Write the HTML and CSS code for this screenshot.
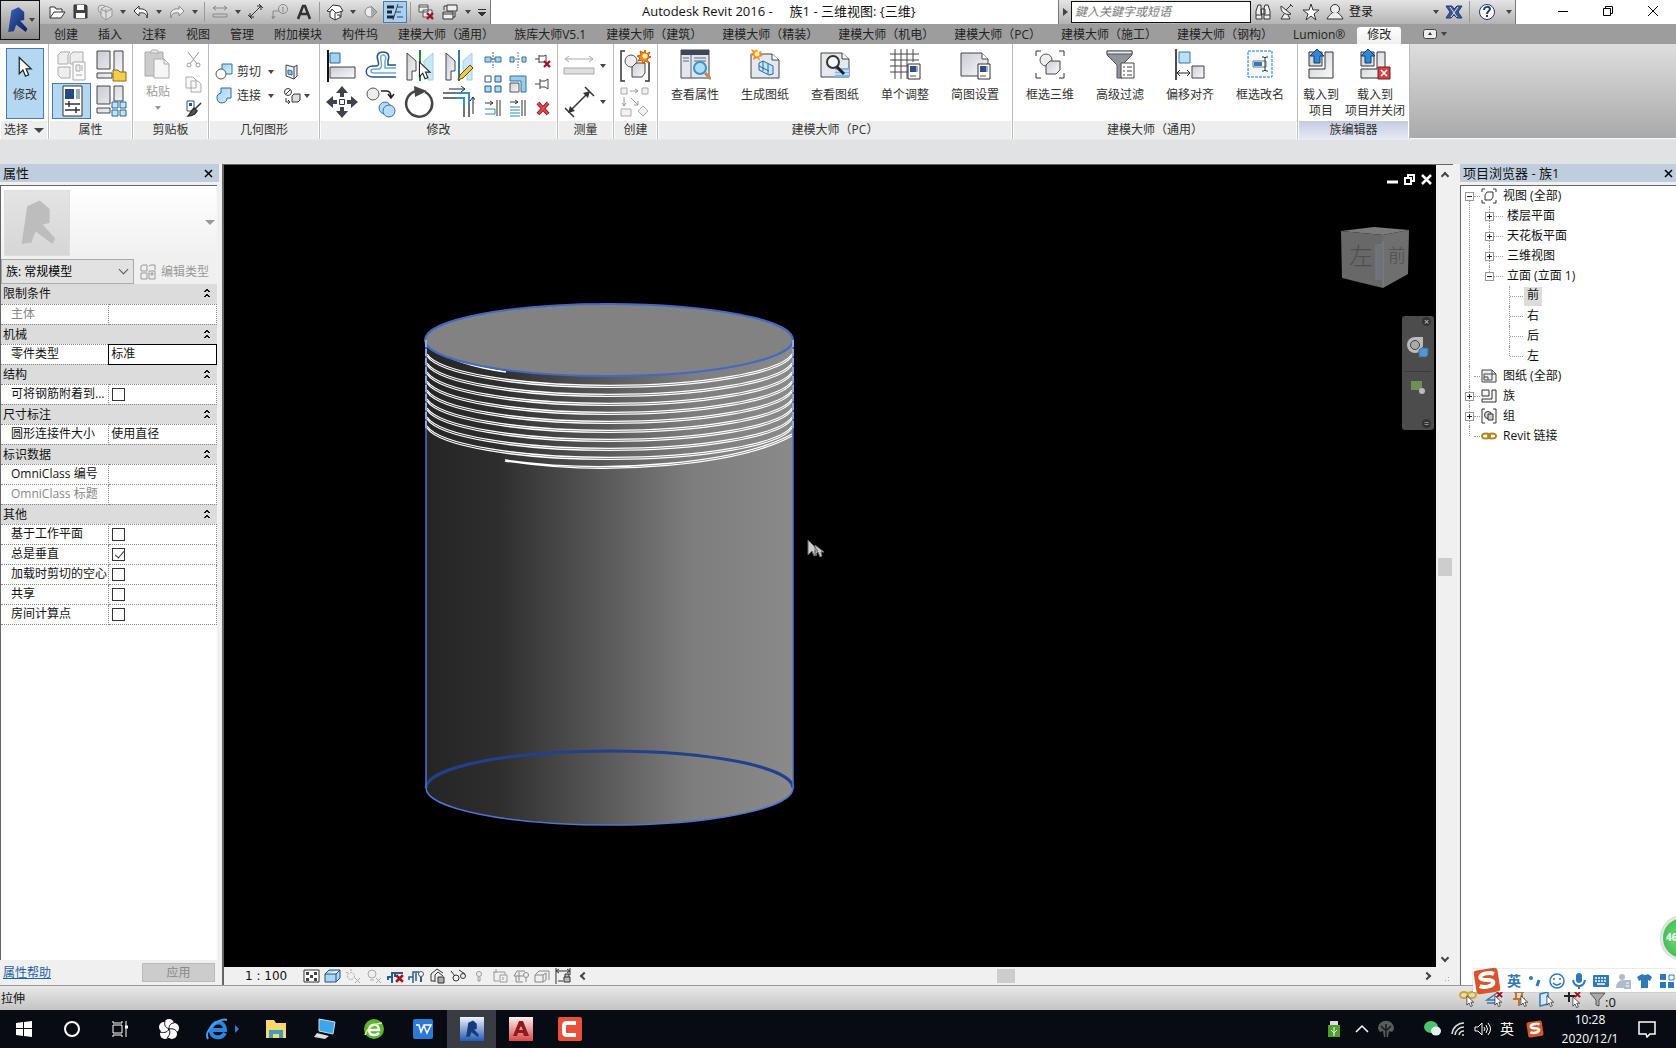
FILE: index.html
```html
<!DOCTYPE html>
<html lang="zh-CN">
<head>
    <meta charset="UTF-8">
    <meta name="viewport" content="width=device-width, initial-scale=1.0">
    <title>Autodesk Revit 2016</title>
    <link rel="stylesheet" href="styles.css">
</head>
<body>
    <svg class="defs" width="0" height="0">
        <defs>
            <linearGradient id="steel" x1="0" y1="0" x2="1" y2="1"><stop offset="0" stop-color="#c9ccd4"/><stop offset="1" stop-color="#fafafc"/></linearGradient>
            <linearGradient id="sky" x1="0" y1="0" x2="1" y2="1"><stop offset="0" stop-color="#9fd0ee"/><stop offset="1" stop-color="#d8effb"/></linearGradient>
            <linearGradient id="navy" x1="0" y1="0" x2="1" y2="1"><stop offset="0" stop-color="#3c66b8"/><stop offset="1" stop-color="#0a1e5c"/></linearGradient>
            <linearGradient id="revit" x1="0" y1="0" x2="0" y2="1"><stop offset="0" stop-color="#f0f4fb"/><stop offset="1" stop-color="#2459b4"/></linearGradient>
            <linearGradient id="acad" x1="0" y1="0" x2="0" y2="1"><stop offset="0" stop-color="#fff0ef"/><stop offset="1" stop-color="#d8474a"/></linearGradient>
            <linearGradient id="side" x1="0" y1="0" x2="1" y2="0"><stop offset="0" stop-color="#252525"/><stop offset="0.2" stop-color="#2e2e2e"/><stop offset="0.5" stop-color="#5b5b5b"/><stop offset="0.72" stop-color="#7d7d7d"/><stop offset="1" stop-color="#8a8a8a"/></linearGradient>
            <symbol id="cursor" viewBox="0 0 12 18"><path d="M1 1v13l3-3 2 5 2.500-1-2-5h4z" fill="#fff" stroke="#222"/></symbol>
            <symbol id="redx" viewBox="0 0 8 8"><path d="M1 1l6 6M7 1l-6 6" stroke="#a3101c" stroke-width="2.400"/></symbol>
            <symbol id="logo-r" viewBox="0 0 30 34"><path d="M8 5l9-4 7 6v10l-5 1 9 10-2 4-12-9-3 8-7 1z"/></symbol>
            <symbol id="sogou" viewBox="0 0 28 28"><g transform="rotate(-9 14 14)"><rect x="2" y="2" width="24" height="24" rx="3" fill="#d9532c"/><path d="M22 8c-5-3-15-2-14 2s12 2 12 6-9 5-14 2" fill="none" stroke="#fff" stroke-width="4"/></g></symbol>
        </defs>
    </svg>

    <header class="app-header">
        <button class="app-button" aria-label="应用程序菜单">
            <svg width="24" height="30"><use href="#logo-r" fill="url(#navy)"/></svg>
            <i class="caret"></i>
        </button>
        <div class="title-bar">
            <div class="quick-access">
                <button><svg width="18" height="18"><path d="M2 15V4h5l1 2h6v3M2 15l4-6h11l-4 6z" fill="#fff" stroke="#333"/></svg></button>
                <button><svg width="18" height="18"><path d="M2 2h12l1 1v12H2z" fill="#444" stroke="#333"/><path d="M5 2h7v5H5zM4 10h9v5H4z" fill="#fff"/></svg></button>
                <button><svg width="18" height="18" fill="#ddd" stroke="#999"><circle cx="6" cy="6" r="4"/><path d="M5 6l5-3 6 3v7l-6 4-5-4zM5 6l5 3 6-3M10 9v8"/></svg></button>
                <button class="drop"><i class="caret"></i></button>
                <button><svg width="18" height="18"><path d="M7 3L2 8l5 5v-3c5-1 8 1 8 5 2-6-2-10-8-9z" fill="#fff" stroke="#333"/></svg></button>
                <button class="drop"><i class="caret"></i></button>
                <button><svg width="18" height="18"><path d="M11 3l5 5-5 5v-3c-5-1-8 1-8 5-2-6 2-10 8-9z" fill="#eee" stroke="#888"/></svg></button>
                <button class="drop"><i class="caret"></i></button>
                <span class="sep"></span>
                <button><svg width="18" height="18" stroke="#888" fill="none"><path d="M2 5h14M5 3L2 5l3 2M13 3l3 2-3 2M2 11h14v3H2z"/></svg></button>
                <button class="drop"><i class="caret"></i></button>
                <button><svg width="18" height="18" stroke="#333" fill="none"><path d="M3 14L14 3M10 3h4v4M3 10v4h4M1 12l4 4M12 1l4 4"/></svg></button>
                <button><svg width="18" height="18" stroke="#888" fill="none"><path d="M2 15V8h6M1 13l1 3 2-3"/><circle cx="12" cy="6" r="4.500"/><path d="M11 5l1-1v5"/></svg></button>
                <button><svg width="18" height="18"><path d="M3 16L8 3h2l5 13M5 11h8" fill="none" stroke="#333" stroke-width="2.600"/></svg></button>
                <span class="sep"></span>
                <button><svg width="18" height="18" fill="#fff" stroke="#333"><path d="M4 8v6l5 3 6-3V8"/><path d="M1 8l6-6 7 1 3 5-7 2-4-4-2 3zM9 10v7M11 12h3v3"/></svg></button>
                <button class="drop"><i class="caret"></i></button>
                <button><svg width="18" height="18"><circle cx="8" cy="9" r="5" fill="#eee" stroke="#888"/><path d="M9 3l6 6-6 6" fill="#aaa" stroke="#888"/></svg></button>
                <button class="pressed"><svg width="18" height="18"><path d="M1 4h7M1 9h5M1 14h7" stroke="#223" stroke-width="3"/><path d="M11 4h6M9 9h6M11 14h6M12 1L7 17" stroke="#345"/></svg></button>
                <span class="sep"></span>
                <button><svg width="18" height="18"><path d="M2 2h9v7H2zM2 4h9M6 7h9v7H6z" fill="#eee" stroke="#555"/><use href="#redx" x="9" y="9" width="8" height="8"/></svg></button>
                <button><svg width="18" height="18"><path d="M6 2h10v6H6zM2 9h10v7H2zM2 11h10M3 7V3h3M14 9v5h-2" fill="#eee" stroke="#333"/></svg></button>
                <button class="drop"><i class="caret"></i></button>
                <button class="drop last"><i class="caret overline"></i></button>
            </div>
            <h1 class="window-title">Autodesk Revit 2016 -     族1 - 三维视图: {三维}</h1>
            <div class="info-center">
                <button class="drop"><i class="caret right"></i></button>
                <input type="text" class="search" placeholder="鍵入关鍵字或短语" aria-label="搜索">
                <button><svg width="18" height="18" fill="#eee" stroke="#333"><path d="M4 2h3v3l1 11H2V8zM11 2h3l2 6v8h-6V5zM7 6h4v5H7zM2 12h6M10 12h6"/></svg></button>
                <button><svg width="18" height="18" fill="#eee" stroke="#333"><path d="M3 3c-1 5 4 10 10 8zM8 7l5-5M12 1l3 3M6 11l-3 5h9l-2-4"/></svg></button>
                <button><svg width="18" height="18"><path d="M9 1l2 6h6l-5 4 2 6-5-4-5 4 2-6-5-4h6z" fill="#fff" stroke="#333"/></svg></button>
                <button><svg width="18" height="18" fill="#eee" stroke="#333"><circle cx="9" cy="6" r="4.500"/><path d="M6 10c-2 2-4 3-5 6h16c-1-3-3-4-5-6"/></svg></button>
                <button class="login">登录</button>
                <button class="drop"><i class="caret"></i></button>
                <button class="exchange"><svg width="18" height="18"><path d="M1 3h6l2 3 3-3h5l-4 6 4 6h-5l-3-3-3 3H1l4-6z" fill="#3d5591" stroke="#26396c"/><path d="M5 4l7 10M13 4l-7 10" stroke="#dde5f5"/></svg></button>
                <button class="help"><svg width="18" height="18"><circle cx="9" cy="9" r="7.500" fill="#fff" stroke="#26396c"/><path d="M6 7c0-4 6-4 6-1 0 2-3 2-3 5M9 12v2" fill="none" stroke="#26396c" stroke-width="2"/></svg></button>
                <button class="drop"><i class="caret"></i></button>
            </div>
            <div class="window-buttons">
                <button aria-label="最小化"><svg width="12" height="12"><path d="M1 6.500h10" stroke="#000"/></svg></button>
                <button aria-label="还原"><svg width="12" height="12" fill="none" stroke="#000"><path d="M1.500 3.500h7v7h-7zM3.500 3V1.500h7v7H9"/></svg></button>
                <button aria-label="关闭"><svg width="12" height="12"><path d="M1 1l10 10M11 1L1 11" stroke="#000"/></svg></button>
            </div>
        </div>
        <nav class="tabs">
            <a href="#">创建</a><a href="#">插入</a><a href="#">注释</a><a href="#">视图</a><a href="#">管理</a><a href="#">附加模块</a><a href="#">构件坞</a><a href="#">建模大师（通用）</a><a href="#">族库大师V5.1</a><a href="#">建模大师（建筑）</a><a href="#">建模大师（精装）</a><a href="#">建模大师（机电）</a><a href="#">建模大师（PC）</a><a href="#">建模大师（施工）</a><a href="#">建模大师（钢构）</a><a href="#">Lumion®</a><a href="#" class="active">修改</a>
            <button class="ribbon-toggle"><svg width="14" height="10"><rect x="0.500" y="0.500" width="13" height="9" rx="2" fill="#eee" stroke="#444"/><path d="M5 6l2-3 2 3z" fill="#333"/></svg><i class="caret"></i></button>
        </nav>
    </header>

    <div class="ribbon">
        <section class="panel p-select">
            <div class="panel-body">
                <button class="tool tall pressed"><svg width="20" height="24"><use href="#cursor" x="3" width="15" height="23"/></svg>修改</button>
            </div>
            <h2>选择 <i class="caret big"></i></h2>
        </section>
        <section class="panel p-props">
            <div class="panel-body grid-2">
                <button><svg width="32" height="32" fill="#eee" stroke="#aaa"><path d="M2 5l3-3h9l-2 3v9H2zM14 5l3-3h10v9l-2 3H14zM2 17h12v11H5l-3-3z"/><path d="M17 12h12v18H17z" fill="#fafafa"/><path d="M20 15h4v6h-4zM26 15v6M20 25h6"/></svg></button>
                <button><svg width="32" height="32"><path d="M2 1h13v18H2zM19 1h9v22h-9zM2 23h15v5H2z" fill="url(#steel)" stroke="#444"/><path d="M18 20h5l2 2h6v9H18z" fill="#f4cf4e" stroke="#8a6a18"/></svg></button>
                <button class="pressed"><svg width="32" height="32"><path d="M7 1h19v30H7z" fill="#fff" stroke="#333"/><path d="M9 4h9v10H9z" fill="#234a86"/><path d="M20 4h4v10h-4z" fill="#9ab"/><path d="M9 19h15M9 25h15M13 16v6M20 22v6" stroke="#333" stroke-width="1.500"/></svg></button>
                <button><svg width="32" height="32"><path d="M2 1h13v18H2zM19 1h9v15h-9zM2 23h13v5H2z" fill="url(#steel)" stroke="#444"/><path d="M17 17h6v6h-6zM25 17h6v6h-6zM17 25h6v6h-6zM25 25h6v6h-6z" fill="#bfe3f7" stroke="#2a6591"/></svg></button>
            </div>
            <h2>属性</h2>
        </section>
        <section class="panel p-clip">
            <div class="panel-body">
                <button class="tool tall disabled"><svg width="32" height="32" stroke="#aaa"><path d="M3 4h18v24H3z" fill="#ccc"/><path d="M8 5l2-3h5l2 3z" fill="#eee"/><path d="M12 11h10l5 5v14H12z" fill="#f6f6f6"/><path d="M22 11v5h5" fill="none"/></svg>粘贴<i class="caret"></i></button>
                <div class="stack">
                    <button><svg width="18" height="18" fill="none" stroke="#999"><path d="M3 1l9 12M14 1L5 13"/><circle cx="4" cy="14" r="2"/><circle cx="13" cy="14" r="2"/></svg></button>
                    <button><svg width="18" height="18" fill="#fafafa" stroke="#aaa"><path d="M1 2h7l3 3v8H1zM6 6h7l3 3v8H6z"/></svg></button>
                    <button><svg width="18" height="18"><path d="M2 2h7v10H2z" fill="#fff" stroke="#334a77"/><path d="M4 4h3v3H4z" fill="#334a77"/><path d="M16 4l-6 6M9 9l3 3c-2 4-5 5-9 5 2-2 3-5 6-8z" fill="#555" stroke="#333" stroke-width="1.500"/></svg></button>
                </div>
            </div>
            <h2>剪贴板</h2>
        </section>
        <section class="panel p-geom">
            <div class="panel-body rows">
                <div class="row">
                    <button><svg width="18" height="18"><path d="M7 1h10v10H7z" fill="url(#sky)" stroke="#3273a3"/><circle cx="6" cy="11" r="5" fill="#fff" stroke="#555"/></svg>剪切</button>
                    <button class="drop"><i class="caret"></i></button>
                    <button class="lone"><svg width="18" height="18"><path d="M3 2l8 2 3-2v11l-3 3-8-3zM11 4v12" fill="#eee" stroke="#444"/><path d="M5 7l4 1v4l-4-1z" fill="#8ccbf0" stroke="#286a9a"/></svg></button>
                </div>
                <div class="row">
                    <button><svg width="18" height="18"><path d="M6 6V1h10v10h-4a5 5 0 1 1-6-5z" fill="url(#sky)" stroke="#286a9a"/></svg>连接</button>
                    <button class="drop"><i class="caret"></i></button>
                    <button class="lone"><svg width="18" height="18"><circle cx="5" cy="5" r="3.500" fill="#fff" stroke="#333"/><path d="M3 7l4-4M3 11v4h3M5 13l2 2-2 2" fill="none" stroke="#333"/><path d="M9 9l2-2h6v6l-2 2H9z" fill="#ddd" stroke="#333"/></svg></button>
                    <button class="drop"><i class="caret"></i></button>
                </div>
            </div>
            <h2>几何图形</h2>
        </section>
        <section class="panel p-modify">
            <div class="panel-body">
                <div class="grid-4">
                    <button><svg width="32" height="32"><path d="M2 0v32" stroke="#111" stroke-width="2"/><path d="M4 3h10v10H4z" fill="#9fd3f2" stroke="#2a6591"/><path d="M4 17h25v11H4z" fill="url(#steel)" stroke="#444"/></svg></button>
                    <button><svg width="32" height="32" fill="none" stroke-width="1.500"><path d="M31 27H8c-9 0-9-11 0-11h3c3 0 3-2 2-5-2-6 0-9 5-9s7 3 5 9v4h8" stroke="#285680"/><path d="M31 23H9c-4 0-4-4 0-4h4c4 0 4-4 3-8-1-4 0-6 2-6s4 2 2 6v7h11" stroke="#71a8d0"/></svg></button>
                    <button><svg width="32" height="32"><path d="M3 3l9 8v10H8v9H3z" fill="url(#steel)" stroke="#444"/><path d="M29 3l-9 8v10h4v9h5z" fill="#c8e7f8" stroke="#a8cde2"/><path d="M16 0v31" stroke="#218a35" stroke-width="2"/><use href="#cursor" x="14" y="11" width="14" height="20"/></svg></button>
                    <button><svg width="32" height="32"><path d="M3 3l9 8v10H8v9H3z" fill="url(#steel)" stroke="#444"/><path d="M29 3l-9 8v10h4v9h5z" fill="#c8e7f8" stroke="#a8cde2"/><path d="M16 0v31" stroke="#3476ac" stroke-width="2"/><path d="M15 30l2-5 10-10 3 3-10 10z" fill="#f2c84b" stroke="#5f4718"/></svg></button>
                    <button><svg width="32" height="32" fill="#3d424c"><path d="M16 0l6 7h-4v4h-4V7h-4zM16 32l6-7h-4v-4h-4v4h-4zM0 16l7-6v4h4v4H7v4zM32 16l-7-6v4h-4v4h4v4z"/><path d="M13.500 13.500h5v5h-5z" fill="#fff" stroke="#333"/></svg></button>
                    <button><svg width="32" height="32"><circle cx="8" cy="8" r="6" fill="#eee" stroke="#555"/><path d="M16 5h6q4 0 4 7M23 8l3 4 3-4" fill="none" stroke="#222" stroke-width="1.500"/><circle cx="20" cy="22" r="6" fill="#b5dcf4" stroke="#3273a3"/><circle cx="24" cy="25" r="6" fill="#b5dcf4" stroke="#3273a3"/></svg></button>
                    <button><svg width="32" height="32"><path d="M12 5a13 13 0 1 0 9 1" fill="none" stroke="#444" stroke-width="2.500"/><path d="M10 0l13 5-12 6z" fill="#444"/></svg></button>
                    <button><svg width="32" height="32" fill="none"><path d="M0 7h14M0 12h14M21 16v15M26 16v15" stroke="#444" stroke-width="1.500"/><path d="M12 7h14v12M12 12h9v7" stroke="#3b8ec5" stroke-width="2"/><path d="M6 3h15M18 0l4 3-4 3M30 28V12M27 15l3-4 3 4" stroke="#222"/></svg></button>
                </div>
                <div class="grid-3">
                    <button><svg width="18" height="18"><path d="M1 6h6v5H1zM11 6h6v5h-6z" fill="#9fd3f2" stroke="#3273a3"/><path d="M9 1v16M7 8h4" stroke="#555" stroke-dasharray="2 1"/></svg></button>
                    <button><svg width="18" height="18"><path d="M1 6h4v5H1zM13 6h4v5h-4z" fill="#9fd3f2" stroke="#3273a3"/><path d="M6 8h6M9 1v16" stroke="#777" stroke-dasharray="2 1"/></svg></button>
                    <button><svg width="18" height="18"><path d="M1 8h4M5 4v8M5 5h5l2-1v8l-2-1H5" fill="none" stroke="#444"/><use href="#redx" x="9" y="9" width="8" height="8"/></svg></button>
                    <button><svg width="18" height="18" stroke="#235887"><path d="M1 1h6v6H1z" fill="#fff"/><path d="M11 1h6v6h-6zM1 11h6v6H1zM11 11h6v6h-6z" fill="#aed9f3"/></svg></button>
                    <button><svg width="18" height="18"><path d="M1 1h16v16h-5V6H1z" fill="#99cdea" stroke="#3273a3"/><path d="M1 8h9v9H1z" fill="url(#steel)" stroke="#555"/></svg></button>
                    <button><svg width="18" height="18"><path d="M1 9h5M6 4v10M6 6h5l3-2v10l-3-2H6" fill="#fff" stroke="#444"/></svg></button>
                    <button><svg width="18" height="18" fill="none"><path d="M1 4h8M6 2l3 2-3 2M13 1v16M16 1v16" stroke="#333"/><path d="M1 10h10v5H1" stroke="#2f86bd"/></svg></button>
                    <button><svg width="18" height="18" fill="none"><path d="M1 3h8M6 1l3 2-3 2M13 1v16M16 1v16" stroke="#333"/><path d="M1 8h10M1 11h10M1 14h10M1 17h10" stroke="#2f86bd"/></svg></button>
                    <button><svg width="18" height="18"><path d="M4 4l10 11M14 4L4 15" stroke="#8b1a20" stroke-width="4"/><path d="M4 4l10 11M14 4L4 15" stroke="#e04a4f" stroke-width="2"/></svg></button>
                </div>
            </div>
            <h2>修改</h2>
        </section>
        <section class="panel p-measure">
            <div class="panel-body rows">
                <div class="row"><button><svg width="32" height="32" stroke="#aaa"><path d="M2 9h28M6 6L2 9l4 3M26 6l4 3-4 3" fill="none"/><path d="M1 18h30v6H1z" fill="#ddd"/></svg></button><button class="drop"><i class="caret"></i></button></div>
                <div class="row"><button><svg width="32" height="32"><path d="M6 26L26 6M2 22l9 9M22 1l9 9" stroke="#333" stroke-width="1.500"/><path d="M5 27l2-7 5 5zM27 5l-2 7-5-5z" fill="#333"/></svg></button><button class="drop"><i class="caret"></i></button></div>
            </div>
            <h2>测量</h2>
        </section>
        <section class="panel p-create">
            <div class="panel-body rows">
                <div class="row"><button><svg width="32" height="32"><path d="M6 1H2v30h4M26 31h4V12" fill="none" stroke="#333" stroke-width="1.500"/><circle cx="12" cy="11" r="6" fill="#eee" stroke="#555"/><path d="M13 17l4-4h9v10l-3 4H13z" fill="url(#steel)" stroke="#444"/><path d="M26 0l1 4 4-2-2 4 3 1-4 2 2 4-4-2-2 3-1-4-4 1 2-3-3-2 4-1-1-4 4 2z" fill="#f58a23" stroke="#c05a0c"/><circle cx="26" cy="6" r="2.500" fill="#fff4a0"/></svg></button></div>
                <div class="row"><button><svg width="32" height="32" fill="#f2f2f2" stroke="#aaa"><path d="M2 2h6v6H2zM23 2h6v6h-6zM2 23h10v7H2zM24 20l5 5-5 5-5-5z"/><path d="M11 5h8M16 3l3 2-3 2M5 11v9M3 17l2 3 2-3M12 12l7 7M19 15v4h-4" fill="none" stroke="#999"/></svg></button></div>
            </div>
            <h2>创建</h2>
        </section>
        <section class="panel p-pc">
            <div class="panel-body">
                <button class="tool"><svg width="32" height="32"><path d="M2 2h28v28H2z" fill="#e3e6ee" stroke="#444"/><path d="M2 2h28v5H2z" fill="#3d4658"/><path d="M12 7v23M4 10h6M4 13h6M15 10h12M15 13h12" stroke="#667"/><circle cx="21" cy="20" r="6" fill="#a9dff7" stroke="#3c93c8" stroke-width="2"/><path d="M26 25l6 6" stroke="#c08a50" stroke-width="3"/></svg>查看属性</button>
                <button class="tool"><svg width="32" height="32"><path d="M2 6h21l7 6v18H2z" fill="#e6e8f0" stroke="#444"/><path d="M23 6v6h7" fill="#fff" stroke="#444"/><path d="M10 15l4-2 10 5v8l-4 1-10-5zM10 18l10 5M14 13v10M19 16v10" fill="#c7e6fa" stroke="#2869a8"/><path d="M8 1l1 3 4-1-2 3 3 2-4 1 1 4-3-3-4 2 1-4-4-1 3-2-2-4 4 2z" fill="#f58a23"/><circle cx="8" cy="6" r="2.500" fill="#fff4a0"/></svg>生成图纸</button>
                <button class="tool"><svg width="32" height="32"><path d="M2 5h21l7 6v18H2z" fill="#e6e8f0" stroke="#444"/><path d="M16 20h14v9H16z" fill="#7db9e8"/><path d="M16 23h14M16 26h14" stroke="#fff"/><path d="M23 5v6h7" fill="#fff" stroke="#444"/><circle cx="14" cy="14" r="6" fill="#f4f6fa" stroke="#333" stroke-width="2"/><path d="M18 19l7 7" stroke="#222" stroke-width="3"/></svg>查看图纸</button>
                <button class="tool"><svg width="32" height="32"><path d="M6 1v30M12 1v30M18 1v30M24 1v13M1 6h29M1 12h29M1 18h18M1 24h18" stroke="#444"/><path d="M19 16h12v15H19z" fill="#fff" stroke="#333"/><path d="M21 18h6v6h-6z" fill="#284f8f"/><path d="M21 28h6M28 18v6" stroke="#555"/></svg>单个调整</button>
                <button class="tool"><svg width="32" height="32"><path d="M2 5h21l6 6v17H2z" fill="url(#steel)" stroke="#444"/><path d="M23 5v6h6" fill="#fff" stroke="#444"/><path d="M19 16h12v15H19z" fill="#fff" stroke="#333"/><path d="M21 18h6v6h-6z" fill="#284f8f"/><path d="M21 28h6M28 18v6" stroke="#555"/></svg>简图设置</button>
            </div>
            <h2>建模大师（PC）</h2>
        </section>
        <section class="panel p-general">
            <div class="panel-body">
                <button class="tool"><svg width="32" height="32"><path d="M2 8V3h5M25 3h5v5M2 25v5h5M25 30h5v-5" fill="none" stroke="#333"/><circle cx="12" cy="12" r="6" fill="#eee" stroke="#555"/><path d="M12 17l4-4h10v9l-4 4H12z" fill="url(#steel)" stroke="#444"/></svg>框选三维</button>
                <button class="tool"><svg width="32" height="32"><path d="M3 3h25v4L18 17v13h-5V17L3 7z" fill="#8f959d" stroke="#555"/><path d="M3 3h25v3H3z" fill="#e5e7ea" stroke="#555"/><path d="M17 15h13v15H17z" fill="#fff" stroke="#444"/><path d="M19 19h2M19 23h2M19 27h2M23 19h5M23 23h5M23 27h5" stroke="#444"/></svg>高级过滤</button>
                <button class="tool"><svg width="32" height="32"><path d="M2 1v31" stroke="#111" stroke-width="1.500"/><path d="M5 4h11v11H5z" fill="#b9e2f6" stroke="#2f7ba7"/><path d="M18 18h12v12H18z" fill="url(#steel)" stroke="#444"/><path d="M3 25h13M6 22l-3 3 3 3M13 22l3 3-3 3" fill="none" stroke="#222"/></svg>偏移对齐</button>
                <button class="tool"><svg width="32" height="32"><path d="M4 3h24v26H4z" fill="#f2f9fe" stroke="#2878b8" stroke-dasharray="3 1"/><path d="M9 13h13v6H9z" fill="#fff" stroke="#777"/><path d="M10 14h8v4h-8z" fill="#2f79c4"/><path d="M18 9h2l1 1 1-1h2M18 23h2l1-1 1 1h2M21 10v12" fill="none" stroke="#333"/></svg>框选改名</button>
            </div>
            <h2>建模大师（通用）</h2>
        </section>
        <section class="panel p-family">
            <div class="panel-body">
                <button class="tool"><svg width="32" height="32"><path d="M4 4h13v14H4zM20 4h8v26H4v-9h16z" fill="url(#steel)" stroke="#333"/><path d="M12 1l7 7h-4v7H9V8H5z" fill="#2f88d8" stroke="#123f70"/></svg>载入到<br>项目</button>
                <button class="tool"><svg width="32" height="32"><path d="M2 4h13v14H2zM18 4h8v26H2v-9h16z" fill="url(#steel)" stroke="#333"/><path d="M9 1l7 7h-4v7H6V8H2z" fill="#2f88d8" stroke="#123f70"/><path d="M19 19h12v12H19z" fill="#d24345" stroke="#7c171b"/><path d="M22 22l6 6M28 22l-6 6" stroke="#fff" stroke-width="1.500"/></svg>载入到<br>项目并关闭</button>
            </div>
            <h2>族编辑器</h2>
        </section>
    </div>

    <main class="workspace">
        <aside class="palette properties">
            <div class="palette-title">属性<button aria-label="关闭"><svg width="9" height="9"><path d="M1 1l7 7M8 1L1 8" stroke="#000" stroke-width="1.500"/></svg></button></div>
            <div class="palette-body">
                <div class="type-preview">
                    <div class="thumb"><svg width="42" height="48"><use href="#logo-r" fill="#bdbdbd"/></svg></div>
                    <i class="caret big"></i>
                </div>
                <div class="type-row">
                    <div class="select-wrap"><select aria-label="族类型"><option>族: 常规模型</option></select></div>
                    <button class="edit-type" disabled><svg width="16" height="16" fill="none" stroke="#999"><path d="M1 2l2-1h4v6H1zM9 2l2-1h4v5M1 9h6v6H1zM9 7h6v8H9zM11 9h2v2h-2z"/></svg>编辑类型</button>
                </div>
                <table class="props">
                    <tr class="group"><th colspan="2">限制条件<i></i></th></tr>
                    <tr class="dim"><td>主体</td><td></td></tr>
                    <tr class="group"><th colspan="2">机械<i></i></th></tr>
                    <tr><td>零件类型</td><td class="focus">标准</td></tr>
                    <tr class="group"><th colspan="2">结构<i></i></th></tr>
                    <tr><td><label for="rebar">可将钢筋附着到...</label></td><td><input type="checkbox" id="rebar"></td></tr>
                    <tr class="group"><th colspan="2">尺寸标注<i></i></th></tr>
                    <tr><td>圆形连接件大小</td><td>使用直径</td></tr>
                    <tr class="group"><th colspan="2">标识数据<i></i></th></tr>
                    <tr><td>OmniClass 编号</td><td></td></tr>
                    <tr class="dim"><td>OmniClass 标题</td><td></td></tr>
                    <tr class="group"><th colspan="2">其他<i></i></th></tr>
                    <tr><td><label for="plane">基于工作平面</label></td><td><input type="checkbox" id="plane"></td></tr>
                    <tr><td><label for="vertical">总是垂直</label></td><td><input type="checkbox" id="vertical" checked></td></tr>
                    <tr><td><label for="void">加载时剪切的空心</label></td><td><input type="checkbox" id="void"></td></tr>
                    <tr><td><label for="shared">共享</label></td><td><input type="checkbox" id="shared"></td></tr>
                    <tr><td><label for="room">房间计算点</label></td><td><input type="checkbox" id="room"></td></tr>
                </table>
            </div>
            <div class="palette-foot"><a href="#">属性帮助</a><button disabled>应用</button></div>
        </aside>

        <section class="view">
            <div class="canvas">
                <!-- threaded cylinder -->
                <svg class="model" width="372" height="530" viewBox="424 300 372 530">
                    <defs><path id="turn" d="M428 354A184 36 0 0 0 793 354M428 356A184 36 0 0 0 793 356" fill="none" stroke="#fff" stroke-width="1.300"/></defs>
                    <path d="M427 340V788A183 37 0 0 0 794 788V340z" fill="url(#side)"/>
                    <path d="M427 788A183 37 0 0 1 794 788" fill="none" stroke="#21418e" stroke-width="3"/>
                    <path d="M427 340V788A183 37 0 0 0 794 788V340" fill="none" stroke="#4f74d2" stroke-width="1.500"/>
                    <path d="M428 346q30 19 79 26" fill="none" stroke="#fff" stroke-width="1.500"/>
                    <use href="#turn"/><use href="#turn" y="9"/><use href="#turn" y="18"/><use href="#turn" y="27"/><use href="#turn" y="36"/><use href="#turn" y="45"/><use href="#turn" y="54"/><use href="#turn" y="63"/><use href="#turn" y="72"/>
                    <path d="M506 460C610 475 740 463 793 434M506 461C610 477 740 465 793 436" fill="none" stroke="#fff" stroke-width="1.300"/>
                    <ellipse cx="610" cy="340" rx="184" ry="36" fill="#828282" stroke="#4468c4" stroke-width="2"/>
                    <path d="M427 340v90M794 340v90" stroke="#8fa8e6" stroke-width="2" stroke-dasharray="7 2"/>
                </svg>
                <svg class="pointer" width="18" height="20"><path d="M1 1v15l4-4 2 5 3-1-2-4h3L7 7v0zM8 6v10l3-3 2 5 2-1-1-4h3z" fill="#ccc" stroke="#666"/></svg>
                <div class="view-buttons">
                    <button aria-label="最小化视图"><svg width="11" height="11"><path d="M0 8h11" stroke="#fff" stroke-width="3"/></svg></button>
                    <button aria-label="还原视图"><svg width="11" height="11" fill="none" stroke="#fff"><path d="M1 4h6v6H1zM4 4V1h6v6H7" stroke-width="2"/></svg></button>
                    <button aria-label="关闭视图"><svg width="11" height="11"><path d="M1 1l9 9M10 1l-9 9" stroke="#fff" stroke-width="2.500"/></svg></button>
                </div>
                <svg class="view-cube" width="70" height="62">
                    <path d="M1 4L34 0l35 3-26 5z" fill="#7b7b7b"/>
                    <path d="M1 4l42 4v53L2 51z" fill="#686868"/>
                    <path d="M43 8l26-5-1 44-25 14z" fill="#6f6f6f"/>
                    <path d="M43 14v46" stroke="#848484"/>
                    <path d="M35 17h8v36h-8z" fill="#70727a"/>
                    <text x="9" y="38">左</text>
                    <text x="48" y="35" class="small">前</text>
                </svg>
                <div class="nav-bar">
                    <button class="dot">×</button>
                    <button><svg width="24" height="24"><path d="M9 1h8v8a8 8 0 1 1-8-8z" fill="#bbb"/><circle cx="9" cy="9" r="4.500" fill="#aaa" stroke="#444"/><path d="M13 14l3-2h6v7l-2 2h-7z" fill="#5b93cd" stroke="#36679b"/></svg></button>
                    <hr>
                    <button><svg width="20" height="20"><path d="M3 3h11v9H3z" fill="#6c9158"/><circle cx="14" cy="13" r="3" fill="#bbb"/></svg></button>
                    <button class="dot last">=</button>
                </div>
            </div>
            <div class="scroll-v"><span class="chev up"></span><span class="thumb-v"></span><span class="chev down"></span></div>
            <div class="view-bar">
                <span class="scale">1 : 100</span>
                <button><svg width="17" height="16"><path d="M1 2h15v12H1z" fill="#fff" stroke="#333"/><path d="M3 4h3v3H3zM11 4h3v3h-3zM7 7h3v3H7zM3 10h3v3H3zM11 10h3v3h-3z" fill="#444"/></svg></button>
                <button><svg width="17" height="16"><path d="M1 6l4-4h11v8l-4 4H1zM1 6h11l4-4M12 6v8" fill="#a9d8f5" stroke="#24527d"/></svg></button>
                <button><svg width="17" height="16" fill="none" stroke="#aaa"><circle cx="6" cy="8" r="3.500" stroke-dasharray="2 1"/><path d="M6 1v2M1 4l2 1M10 10l5 5M15 10l-5 5"/></svg></button>
                <button><svg width="17" height="16" fill="none" stroke="#aaa"><circle cx="6" cy="6" r="4"/><path d="M4 12h4M10 10l5 5M15 10l-5 5"/></svg></button>
                <button><svg width="17" height="16"><path d="M1 12v-3h4v6M5 12V5h11M8 5v4" fill="none" stroke="#285d94" stroke-width="2"/><use href="#redx" x="8" y="6" width="9" height="9"/></svg></button>
                <button><svg width="17" height="16"><path d="M1 12V9h4v6M5 12V4h6M8 5v8" fill="none" stroke="#285d94" stroke-width="1.500"/><circle cx="13" cy="6" r="2.500" fill="#fff" stroke="#456"/><path d="M13 9v5" stroke="#456" stroke-width="2"/></svg></button>
                <button><svg width="17" height="16"><path d="M2 6l6-5 6 4M2 6v7h4M6 14V7l3-3 5 4" fill="none" stroke="#333"/><path d="M9 9h6v6H9z" fill="#aaa" stroke="#333"/></svg></button>
                <button><svg width="17" height="16" fill="none" stroke="#333"><path d="M1 3l4 5M9 2l6 4"/><circle cx="6" cy="10" r="3"/><circle cx="13" cy="8" r="2.500"/></svg></button>
                <button><svg width="17" height="16" fill="none" stroke="#999"><circle cx="8" cy="6" r="2.500"/><path d="M7 9v4h2V9"/></svg></button>
                <button><svg width="17" height="16" fill="none" stroke="#999"><path d="M1 4h12v3M2 4v9h5M4 1v4M8 7h7v7H8zM11 9v3"/></svg></button>
                <button><svg width="17" height="16" fill="none" stroke="#888"><path d="M1 8l3-5h8M1 8h9M3 8v6h7M6 4v9"/><circle cx="13" cy="7" r="2.500"/><path d="M13 10v4"/></svg></button>
                <button><svg width="17" height="16" fill="none" stroke="#888"><path d="M1 7l4-4h10v9M1 7h8v7H1zM9 7l3-2v7l-3 2"/></svg></button>
                <button><svg width="17" height="16" fill="none" stroke="#333"><path d="M1 0v16M15 0v7M1 3h14M4 1L1 3l3 2M12 1l3 2-3 2M3 13h5" /><path d="M9 9h6v5H9zM10 9V6h4v3" fill="#bbb"/></svg></button>
                <span class="chev left"></span>
                <span class="thumb-h"></span>
                <span class="chev right-end"></span>
                <span class="grip"></span>
            </div>
        </section>

        <aside class="palette browser">
            <div class="palette-title">项目浏览器 - 族1<button aria-label="关闭"><svg width="9" height="9"><path d="M1 1l7 7M8 1L1 8" stroke="#000" stroke-width="1.500"/></svg></button></div>
            <div class="palette-body">
                <ul class="tree">
                    <li>
                        <div class="node"><b class="minus"></b><s></s><svg width="16" height="16" fill="none" stroke="#333"><path d="M4 1H1v3M12 1h3v3M1 12v3h3M15 12v3h-3M4 7l2-3h6v5l-2 3H4z"/></svg><span>视图 (全部)</span></div>
                        <ul>
                            <li><div class="node"><b></b><s></s><span>楼层平面</span></div></li>
                            <li><div class="node"><b></b><s></s><span>天花板平面</span></div></li>
                            <li><div class="node"><b></b><s></s><span>三维视图</span></div></li>
                            <li>
                                <div class="node"><b class="minus"></b><s></s><span>立面 (立面 1)</span></div>
                                <ul class="leaves">
                                    <li><div class="node"><s></s><span class="selected">前</span></div></li>
                                    <li><div class="node"><s></s><span>右</span></div></li>
                                    <li><div class="node"><s></s><span>后</span></div></li>
                                    <li><div class="node"><s></s><span>左</span></div></li>
                                </ul>
                            </li>
                        </ul>
                    </li>
                    <li><div class="node"><b class="none"></b><s></s><svg width="16" height="16" fill="#eee" stroke="#444"><path d="M1 2h10l4 4v8H1zM3 6h8v6H3zM3 9h4v3M11 2v4h4"/></svg><span>图纸 (全部)</span></div></li>
                    <li><div class="node"><b></b><s></s><svg width="16" height="16" fill="#f4f4f4" stroke="#333"><path d="M1 2h7v6H1zM11 2h4v12H1v-3h10z"/></svg><span>族</span></div></li>
                    <li><div class="node"><b></b><s></s><svg width="16" height="16" fill="none" stroke="#333"><path d="M4 1H1v14h3M12 1h3v14h-3"/><circle cx="7" cy="7" r="3.500" fill="#ddd"/><path d="M7 6h5v6H7z" fill="#ccc"/></svg><span>组</span></div></li>
                    <li><div class="node"><b class="none"></b><s></s><svg width="16" height="16" fill="none" stroke="#b08618" stroke-width="2"><ellipse cx="5" cy="8" rx="4" ry="2.500"/><ellipse cx="11" cy="8" rx="4" ry="2.500"/></svg><span>Revit 链接</span></div></li>
                </ul>
            </div>
            <div class="badge">46</div>
        </aside>
    </main>

    <footer class="status-bar">
        <span>拉伸</span>
        <div class="select-tools">
            <button><svg width="20" height="18"><ellipse cx="5" cy="4" rx="4" ry="3" fill="none" stroke="#d1a51c" stroke-width="2"/><ellipse cx="13" cy="4" rx="4" ry="3" fill="none" stroke="#d1a51c" stroke-width="2"/><use href="#cursor" x="7" y="4" width="9" height="13"/></svg></button>
            <button><svg width="20" height="18"><path d="M12 2L2 9h12M2 12h12" fill="none" stroke="#3478b6" stroke-width="1.500"/><use href="#redx" x="11" width="7" height="7"/><use href="#cursor" x="9" y="4" width="9" height="13"/></svg></button>
            <button><svg width="20" height="18"><path d="M3 1h10M5 1v6M11 1v6M2 8h12M8 8v7" fill="none" stroke="#c3722c" stroke-width="2"/><use href="#cursor" x="9" y="4" width="9" height="13"/></svg></button>
            <button><svg width="20" height="18"><path d="M3 3l8-2v12l-8 2z" fill="#d5ebfb" stroke="#3478b6" stroke-width="1.500"/><use href="#cursor" x="9" y="4" width="9" height="13"/></svg></button>
            <button><svg width="20" height="18"><path d="M6 0v11M1 5h11" stroke="#222" stroke-width="2"/><use href="#redx" x="11" width="7" height="7"/><use href="#cursor" x="9" y="5" width="9" height="13"/></svg></button>
            <button><svg width="18" height="18"><path d="M1 2h15l-6 7v6l-3-1V9z" fill="#aaa" stroke="#555"/></svg></button>
            <span>:0</span>
        </div>
        <div class="ime">
            <svg class="ime-logo" width="28" height="28"><use href="#sogou" width="28" height="28"/></svg>
            <b>英</b>
            <svg width="16" height="18"><circle cx="4" cy="6" r="2" fill="#2f79b8"/><path d="M12 8l-2 6" stroke="#2f79b8" stroke-width="3"/></svg>
            <svg width="16" height="18" fill="none" stroke="#2f79b8" stroke-width="1.500"><circle cx="8" cy="9" r="7"/><path d="M4 11q4 4 8 0M5 6v2M11 6v2"/></svg>
            <svg width="16" height="18"><rect x="5" y="1" width="6" height="10" rx="3" fill="#2f79b8"/><path d="M2 8q1 6 6 6t6-6M8 14v3" fill="none" stroke="#2f79b8" stroke-width="2"/></svg>
            <svg width="16" height="18"><rect y="3" width="16" height="12" rx="1" fill="#2f79b8"/><path d="M2 6h12M2 9h12" stroke="#fff" stroke-width="1.500" stroke-dasharray="2 1"/><path d="M4 12h8" stroke="#fff" stroke-width="1.500"/></svg>
            <svg width="16" height="18" fill="#aebccd"><circle cx="7" cy="5" r="3"/><path d="M1 16c0-9 9-9 9-7v7zM9 8h7v9H9z"/><path d="M11 11h3M11 14h3" stroke="#fff"/></svg>
            <svg width="16" height="18" fill="#2f79b8"><path d="M5 2q3 2 6 0l4 3-2 4-2-1v8H4V8L2 9 0 5z"/></svg>
            <svg width="16" height="18" fill="#2f79b8"><path d="M1 2h6v6H1zM1 10h6v6H1zM9 10h6v6H9z"/><path d="M10 3h5v5h-5z" fill="none" stroke="#2f79b8"/></svg>
        </div>
    </footer>

    <div class="taskbar">
        <button class="sys"><svg width="18" height="18" fill="#fff"><path d="M1 3l7-1v6H1zM9 2l8-1v7H9zM1 9h7v7l-7-1zM9 9h8v8l-8-1z"/></svg></button>
        <button class="sys"><svg width="18" height="18"><circle cx="9" cy="9" r="7" fill="none" stroke="#fff" stroke-width="2"/></svg></button>
        <button class="sys"><svg width="18" height="18" fill="none" stroke="#fff"><path d="M2 5h9v8H2zM2 1v2h9V1M2 17v-2h9v2M15 1v16"/><path d="M14 7h3" stroke-width="3"/></svg></button>
        <button><svg width="22" height="22" fill="#fff"><circle cx="11" cy="6" r="5"/><circle cx="16" cy="10" r="5"/><circle cx="14" cy="16" r="5"/><circle cx="7" cy="16" r="5"/><circle cx="6" cy="9" r="5"/><path d="M11 11c0-4 2-6 5-6M11 11c4-1 7 1 8 3M11 11c2 4 0 7-2 9M11 11c-2 4-6 4-9 3M11 11C7 9 6 7 7 3" fill="none" stroke="#0a0c12"/></svg></button>
        <button class="ie"><svg width="34" height="24"><path d="M6 13h14c0-10-13-10-14 0-1 8 10 10 14 3" fill="none" stroke="#2b86e0" stroke-width="4"/><path d="M3 22C-2 14 14 0 22 3" fill="none" stroke="#48a0ee" stroke-width="2"/><path d="M30 8l4 4-4 4z" fill="#2f7fd6"/></svg></button>
        <button><svg width="22" height="22"><path d="M1 2h8l2 3h10v15H1z" fill="#f6d873"/><path d="M4 20v-8h14v8h-4v-4H8v4z" fill="#3f9dbf"/></svg></button>
        <button><svg width="24" height="22"><path d="M6 1l16 3-2 12-14-3z" fill="#3fa5ea" stroke="#bfe0f5"/><path d="M4 15l12 3-4 3-11-2z" fill="#ddd"/></svg></button>
        <button><svg width="22" height="22"><circle cx="11" cy="11" r="10" fill="#5eb42e"/><path d="M6 12h10c0-7-9-7-10 0 0 6 7 6 10 3" fill="none" stroke="#fff" stroke-width="2.500"/><path d="M2 17Q6 6 19 5" fill="none" stroke="#d9f2b0" stroke-width="1.500"/></svg></button>
        <button><svg width="22" height="22"><rect x="1" y="1" width="20" height="20" rx="2" fill="#2d79d6"/><path d="M4 7h3l2 7 3-7h7l-4 8-3-7" fill="none" stroke="#fff" stroke-width="1.500"/></svg></button>
        <button class="active"><svg width="24" height="24"><path d="M0 0h24v24H0z" fill="url(#revit)"/><use href="#logo-r" x="4" y="3" width="16" height="18" fill="#173a7a"/></svg></button>
        <button><svg width="24" height="24"><path d="M0 0h24v24H0z" fill="url(#acad)"/><path d="M10 4h4l6 15h-5l-1-3h-5l-1 3H4zM12 9l-2 4h4z" fill="#8d1a1f"/></svg></button>
        <button><svg width="24" height="24"><rect width="24" height="24" rx="2" fill="#e8503a"/><path d="M18 6H9q-3 0-3 3v6q0 3 3 3h9" fill="none" stroke="#fff" stroke-width="4"/></svg></button>
        <div class="tray">
            <svg width="14" height="18"><path d="M3 1h8v4H3z" fill="#ddd"/><path d="M1 5h12v12H1z" fill="#4ea22c"/><path d="M7 7v9M4 10l3 3 3-3" fill="none" stroke="#fff"/></svg>
            <svg class="t-up" width="14" height="18"><path d="M1 12l6-6 6 6" fill="none" stroke="#fff" stroke-width="1.500"/></svg>
            <svg class="t-dark" width="18" height="18"><path d="M1 9C1-2 17-2 17 9l-2 3-3-1-1 6H7l-1-6-3 1z" fill="#5a5d5e"/><path d="M9 4v13M4 6l4 4M14 6l-4 4" stroke="#15181c" stroke-width="1.500"/></svg>
            <svg class="t-chat" width="18" height="18"><ellipse cx="7" cy="7" rx="7" ry="6" fill="#4fc16d"/><ellipse cx="12" cy="11" rx="5" ry="4.500" fill="#e6efe9"/></svg>
            <svg class="t-net" width="16" height="18" fill="none" stroke="#ddd" stroke-width="1.500"><path d="M2 14A12 12 0 0 1 14 3M5 15A9 9 0 0 1 14 7M9 15a5 5 0 0 1 5-4M12 15h2"/></svg>
            <svg class="t-vol" width="18" height="18" fill="none" stroke="#fff"><path d="M1 7h3l4-4v12l-4-4H1zM10 7q2 2 0 4M12 5q3 4 0 8M14 3q5 6 0 12"/></svg>
            <span class="lang">英</span>
            <svg class="t-s" width="18" height="18"><use href="#sogou" width="18" height="18"/></svg>
            <time>10:28<br>2020/12/1</time>
            <svg class="t-note" width="18" height="18"><path d="M1 2h16v12h-5l-3 3-1-3H1z" fill="none" stroke="#fff" stroke-width="1.500"/></svg>
        </div>
    </div>
</body>
</html>
```

FILE: styles.css
```css
* {
    box-sizing: border-box;
}
body {
    margin: 0;
    height: 100vh;
    display: flex;
    flex-direction: column;
    overflow: hidden;
    background-color: #f0f0f0;
    font: 12px/16px "Open Sans", "Noto Sans CJK SC", sans-serif;
    color: #111;
}
button {
    display: flex;
    align-items: center;
    justify-content: center;
    padding: 0;
    border: none;
    background: none;
    font: inherit;
    color: inherit;
}
svg {
    display: block;
    flex: none;
}
.defs {
    position: absolute;
}
h1, h2, ul, hr {
    margin: 0;
    padding: 0;
    font-size: 12px;
    font-weight: normal;
}
.caret {
    width: 0;
    border: 3px solid transparent;
    border-top: 4px solid #444;
    border-bottom: 0;
}
.caret.big {
    border-width: 5px 5px 0;
}
.caret.right {
    border: 4px solid transparent;
    border-left: 5px solid #444;
    border-right: 0;
}
.caret.overline {
    width: 8px;
    height: 7px;
    border: none;
    border-top: 1px solid #333;
    background: linear-gradient(#333, #333) center 2px / 8px 1px no-repeat,
        linear-gradient(#333, #333) center 3px / 6px 1px no-repeat,
        linear-gradient(#333, #333) center 4px / 4px 1px no-repeat,
        linear-gradient(#333, #333) center 5px / 2px 1px no-repeat;
}
.drop {
    width: 12px;
}

/* header */
.app-header {
    display: grid;
    grid-template-columns: 40px 1fr;
    grid-template-rows: 24px 20px;
    background-color: #9d9d9d;
}
.app-button {
    grid-row: 1 / 3;
    height: 40px;
    border: 1px solid #111;
    background: linear-gradient(#d5d5d5, #8b8b8b);
}
.title-bar {
    display: flex;
    background-color: #fff;
}
.quick-access, .info-center {
    display: flex;
    align-items: center;
    background: linear-gradient(#e4e4e4, #b4b4b4);
    border-right: 1px solid #777;
}
.quick-access {
    padding: 0 2px 0 5px;
}
.quick-access button:not(.drop), .info-center button:not(.drop) {
    width: 24px;
    height: 22px;
}
.quick-access .pressed {
    border: 1px solid #2d6a9f;
    background-color: #a9d0f0;
}
.quick-access .last {
    margin-left: 2px;
}
.sep {
    width: 1px;
    height: 20px;
    margin: 0 3px;
    background-color: #999;
}
.window-title {
    flex: 1;
    padding-left: 151px;
    font-size: 13px;
    line-height: 22px;
    white-space: pre;
}
.info-center {
    width: 458px;
    border-left: 1px solid #777;
}
.search {
    width: 180px;
    height: 22px;
    padding: 0 3px 3px;
    border: 1px solid #111;
    background-color: #fff;
    font: italic 12px "Noto Sans CJK SC", sans-serif;
}
.search::placeholder {
    color: #777;
}
.info-center button.login {
    width: 28px;
}
.info-center .login + .drop {
    margin-left: auto;
}
.exchange {
    margin: 0 3px 0 0;
}
.info-center button.help {
    border-left: 1px solid #999;
    width: 34px;
}
.window-buttons {
    display: flex;
    width: 160px;
    padding: 0 0 2px 24px;
}
.window-buttons button {
    width: 45px;
}
.tabs {
    display: flex;
    padding-left: 4px;
    color: #222;
}
.tabs a {
    padding: 3px 10px 0;
    color: inherit;
    text-decoration: none;
    white-space: nowrap;
}
.tabs .active {
    margin: 3px 0 0 2px;
    padding-top: 0;
    border-radius: 3px 3px 0 0;
    background: linear-gradient(#fff, #eee);
}
.ribbon-toggle {
    gap: 4px;
    margin-left: 22px;
}

/* ribbon */
.ribbon {
    display: flex;
    height: 120px;
    padding-bottom: 25px;
    background: linear-gradient(#dedede, #a9a9a9 94px, #fff 94px, #e0e2e4 96px);
    color: #333;
}
.panel {
    display: flex;
    flex-direction: column;
    flex: none;
    border-right: 1px solid #bbb;
    background-color: #fff;
}
.panel h2 {
    display: flex;
    align-items: center;
    justify-content: center;
    gap: 6px;
    height: 18px;
    margin: 0 1px;
    background-color: #eee;
}
.panel-body {
    flex: 1;
    display: flex;
    padding-top: 4px;
    min-height: 0;
}
.p-select { width: 49px; }
.p-props { width: 84px; }
.p-clip { width: 76px; }
.p-geom { width: 111px; }
.p-modify { width: 238px; }
.p-measure { width: 56px; }
.p-create { width: 44px; }
.p-pc { width: 355px; }
.p-general { width: 285px; }
.p-family { width: 112px; }
.p-family h2 {
    background: linear-gradient(#c5cae0, #e6e9f4);
}
.tool {
    flex-direction: column;
    justify-content: flex-start;
    width: 70px;
    gap: 7px;
    text-align: center;
}
.tool.tall {
    height: 71px;
}
.p-select .tool {
    width: 38px;
    margin-left: 5px;
    padding-top: 8px;
}
.p-select .panel-body {
    padding-left: 1px;
}
.pressed {
    outline: 1px solid #4a7ba8;
    outline-offset: -1px;
    background-color: #b4d8f2;
}
.tool.disabled {
    color: #999;
    width: 50px;
    gap: 4px;
}
.tool .caret {
    margin-top: 2px;
}
.disabled .caret {
    border-top-color: #999;
}
.grid-2 {
    display: grid;
    grid-template-columns: 39px 39px;
    grid-template-rows: 35px 36px;
    padding-left: 3px;
}
.stack {
    display: grid;
    grid-template-rows: repeat(3, 24px);
    width: 20px;
    margin-left: 1px;
}
.rows {
    flex-direction: column;
}
.row {
    display: flex;
    align-items: center;
    height: 36px;
}
.p-geom .panel-body {
    padding: 16px 0 0 6px;
}
.p-geom .row {
    height: 24px;
}
.p-geom .row button:first-child {
    gap: 4px;
    margin-right: 4px;
}
.lone {
    margin-left: 6px;
}
.p-measure .row {
    padding-left: 5px;
    gap: 2px;
}
.p-create .row {
    padding-left: 5px;
}
.grid-4 {
    display: grid;
    grid-template-columns: repeat(4, 39px);
    grid-template-rows: 36px 36px;
    padding-left: 2px;
}
.grid-3 {
    display: grid;
    grid-template-columns: repeat(3, 25px);
    grid-template-rows: repeat(3, 24px);
    padding-left: 2px;
}
.p-pc .panel-body, .p-general .panel-body {
    padding-left: 2px;
}
.p-family .tool {
    width: 46px;
}
.p-family .tool + .tool {
    width: 62px;
    white-space: nowrap;
}

/* palettes */
.workspace {
    flex: 1;
    display: flex;
    min-height: 0;
    border-bottom: 1px solid #999;
}
.palette {
    display: flex;
    flex-direction: column;
    flex: none;
}
.palette-title {
    display: flex;
    justify-content: space-between;
    align-items: center;
    height: 18px;
    padding: 0 3px;
    background-color: #bfcddd;
    font-size: 13px;
}
.palette-title button {
    width: 15px;
}
.palette-body {
    flex: 1;
    margin-top: 3px;
    border-top: 1px solid #666;
    border-left: 1px solid #666;
    background-color: #fff;
}
.properties {
    width: 219px;
}
.properties .palette-body {
    margin-right: 2px;
}
.type-preview {
    display: flex;
    align-items: center;
    justify-content: space-between;
    height: 73px;
    padding: 0 2px 0 3px;
    background: linear-gradient(#fff, #f0f0f0);
}
.type-preview .caret {
    border-top-color: #999;
}
.thumb {
    display: grid;
    place-items: center;
    width: 66px;
    height: 66px;
    border: 1px solid #ddd;
    background: linear-gradient(#e4e4e4, #d6d6d6);
}
.type-row {
    display: flex;
    gap: 6px;
    height: 25px;
    background-color: #f0f0f0;
}
.select-wrap {
    position: relative;
}
.select-wrap::after {
    content: "";
    position: absolute;
    right: 7px;
    top: 7px;
    width: 6px;
    height: 6px;
    border: solid #555;
    border-width: 0 1px 1px 0;
    transform: rotate(45deg);
}
.type-row select {
    appearance: none;
    width: 133px;
    height: 25px;
    padding: 0 4px;
    border: 1px solid #aaa;
    border-radius: 0;
    background-color: #e2e2e2;
    font: inherit;
}
.edit-type {
    gap: 5px;
    color: #999;
}
.props {
    width: 100%;
    border-collapse: collapse;
    table-layout: fixed;
}
.props tr {
    height: 20px;
}
.props th, .props td {
    height: 20px;
    padding: 0 2px;
    font-weight: normal;
    text-align: left;
    line-height: 17px;
    white-space: nowrap;
}
.props th {
    background-color: #dcdcdc;
}
.props td {
    padding-bottom: 2px;
    border: 1px dotted #888;
    border-left: none;
}
.props td:first-child {
    width: 107px;
    padding-left: 10px;
    padding-right: 0;
}
.props .dim {
    color: #888;
}
.props td.focus {
    border: 1px solid #000;
}
.props th i {
    float: right;
    width: 6px;
    height: 10px;
    margin: 3px 5px 0 0;
    background:
        linear-gradient(135deg, transparent 50%, #111 50% 72%, transparent 72%) 0 0 / 3px 4px no-repeat,
        linear-gradient(225deg, transparent 50%, #111 50% 72%, transparent 72%) 3px 0 / 3px 4px no-repeat,
        linear-gradient(135deg, transparent 50%, #111 50% 72%, transparent 72%) 0 5px / 3px 4px no-repeat,
        linear-gradient(225deg, transparent 50%, #111 50% 72%, transparent 72%) 3px 5px / 3px 4px no-repeat;
}
.props input {
    appearance: none;
    display: block;
    width: 13px;
    height: 13px;
    margin: 2px 1px 0;
    border: 1px solid #333;
    background-color: #fff;
}
.props input:checked::after {
    content: "";
    display: block;
    width: 4px;
    height: 8px;
    margin: 0 4px;
    border: solid #333;
    border-width: 0 1px 1px 0;
    transform: rotate(40deg);
}
.palette-foot {
    display: flex;
    justify-content: space-between;
    align-items: center;
    height: 25px;
    padding: 0 4px 0 3px;
}
.palette-foot a {
    color: #1c5fa5;
}
.palette-foot button {
    width: 73px;
    height: 19px;
    border: 1px solid #bbb;
    background-color: #ccc;
    color: #888;
}

/* view */
.view {
    flex: 1;
    display: grid;
    grid-template-columns: 1fr 17px;
    grid-template-rows: 1fr 18px;
    margin: 0 7px 0 3px;
    border: 1px solid #666;
    border-width: 1px 0 0 2px;
}
.canvas {
    position: relative;
    overflow: hidden;
    background-color: #000;
}
.model {
    position: absolute;
    left: 199px;
    top: 135px;
}
.pointer {
    position: absolute;
    left: 583px;
    top: 374px;
}
.view-buttons {
    position: absolute;
    top: 9px;
    right: 4px;
    display: flex;
    gap: 6px;
}
.view-cube {
    position: absolute;
    top: 62px;
    right: 26px;
}
.view-cube text {
    font-size: 24px;
    font-weight: 300;
    fill: #4e4e4e;
}
.view-cube .small {
    font-size: 18px;
}
.nav-bar {
    position: absolute;
    top: 151px;
    right: 2px;
    display: flex;
    flex-direction: column;
    align-items: center;
    width: 32px;
    height: 114px;
    padding: 1px;
    border-radius: 3px;
    background-color: #4c4c4c;
}
.nav-bar .dot {
    align-self: flex-end;
    width: 9px;
    height: 9px;
    margin: 0 2px 10px;
    border-radius: 50%;
    background-color: #333;
    color: #ccc;
    font-size: 9px;
    line-height: 9px;
}
.nav-bar .last {
    margin: auto 2px 1px;
}
.nav-bar hr {
    width: 26px;
    margin: 11px 0 6px;
    border: none;
    border-top: 1px solid #3c3c3c;
}
.scroll-v {
    display: flex;
    flex-direction: column;
    align-items: center;
    justify-content: space-between;
    padding: 8px 0 6px;
}
.thumb-v, .thumb-h {
    width: 14px;
    height: 18px;
    background-color: #cdcdcd;
}
.thumb-h {
    width: 18px;
    height: 14px;
}
.chev {
    width: 6px;
    height: 6px;
    border: solid #444;
    border-width: 2px 0 0 2px;
    transform: rotate(45deg);
}
.chev.down {
    transform: rotate(225deg);
}
.chev.left {
    transform: rotate(-45deg);
}
.chev.right-end {
    transform: rotate(135deg);
}
.view-bar {
    grid-column: 1 / 3;
    display: flex;
    align-items: center;
    padding: 0 0 1px 21px;
}
.view-bar button {
    width: 21px;
}
.scale {
    width: 56px;
    font-family: "DejaVu Sans", sans-serif;
}
.view-bar .left {
    margin-left: 7px;
}
.thumb-h {
    margin: 0 auto;
}
.grip {
    width: 10px;
    height: 10px;
    margin: 4px 2px 0 11px;
    background: radial-gradient(#aaa 1px, transparent 1px) 0 0 / 3px 3px;
    clip-path: polygon(100% 0, 100% 100%, 0 100%);
}

/* project browser */
.browser {
    position: relative;
    width: 216px;
}
.browser .palette-title {
    padding-right: 0;
}
.tree {
    padding: 0 0 0 4px;
    list-style: none;
}
.tree ul {
    margin-left: 20px;
    list-style: none;
}
.tree li {
    position: relative;
}
.tree li::before {
    content: "";
    position: absolute;
    left: 4px;
    top: 0;
    bottom: 0;
    border-left: 1px dotted #999;
}
.tree li:last-child::before {
    bottom: auto;
    height: 10px;
}
.tree > li:first-child::before {
    top: 10px;
}
.node {
    position: relative;
    display: flex;
    align-items: center;
    height: 20px;
}
.node b {
    width: 9px;
    height: 9px;
    border: 1px solid #999;
    background:
        linear-gradient(#222, #222) center / 5px 1px no-repeat,
        linear-gradient(#222, #222) center / 1px 5px no-repeat,
        #fff;
}
.node .minus {
    background: linear-gradient(#222, #222) center / 5px 1px no-repeat, #fff;
}
.node .none {
    visibility: hidden;
}
.node s {
    width: 6px;
    margin-right: 1px;
    border-top: 1px dotted #999;
}
.tree ul .node s {
    width: 9px;
}
.tree .leaves .node s {
    width: 13px;
    margin-left: 5px;
}
.node span {
    padding: 0 3px;
}
.node svg + span {
    padding-left: 6px;
}
.node .selected {
    height: 19px;
    background-color: #dcdcdc;
}
.badge {
    position: absolute;
    right: -29px;
    bottom: 25px;
    width: 44px;
    height: 44px;
    padding-left: 3px;
    border: 2px solid #dfe9df;
    border-radius: 50%;
    background: radial-gradient(#7be07b, #35b04a);
    box-shadow: 0 0 2px #666;
    color: #fff;
    font-weight: bold;
    font-size: 10px;
    line-height: 38px;
}

/* status bar */
.status-bar {
    position: relative;
    display: flex;
    justify-content: space-between;
    align-items: center;
    height: 24px;
    padding: 2px 0 0 1px;
    background: linear-gradient(#e8e8e8, #c4c4c4);
}
.select-tools {
    display: flex;
    align-items: center;
    gap: 6px;
    width: 217px;
    padding-top: 2px;
}
.select-tools span {
    padding-top: 4px;
    margin-left: -8px;
    font-size: 13px;
}
.ime {
    position: absolute;
    right: 0;
    top: -17px;
    display: flex;
    align-items: center;
    gap: 6px;
    width: 203px;
    height: 23px;
    overflow: visible;
    background-color: #fff;
    box-shadow: 0 0 1px #888;
}
.ime b {
    color: #2f79b8;
    font-size: 14px;
}

/* taskbar */
.taskbar {
    display: flex;
    height: 38px;
    background-color: #080b12;
    color: #fff;
}
.taskbar button {
    width: 49px;
}
.taskbar .sys {
    width: 48px;
}
.taskbar .ie {
    width: 58px;
}
.taskbar .active {
    background-color: #393d43;
}
.tray {
    display: flex;
    align-items: center;
    gap: 8px;
    margin-left: auto;
    padding-right: 20px;
}
.t-up {
    margin: 0 0 0 6px;
}
.t-chat {
    margin-left: 21px;
}
.lang {
    font-size: 14px;
    margin-right: 4px;
}
.tray time {
    width: 74px;
    margin: 0 3px 0 1px;
    text-align: center;
    line-height: 19px;
}
```
